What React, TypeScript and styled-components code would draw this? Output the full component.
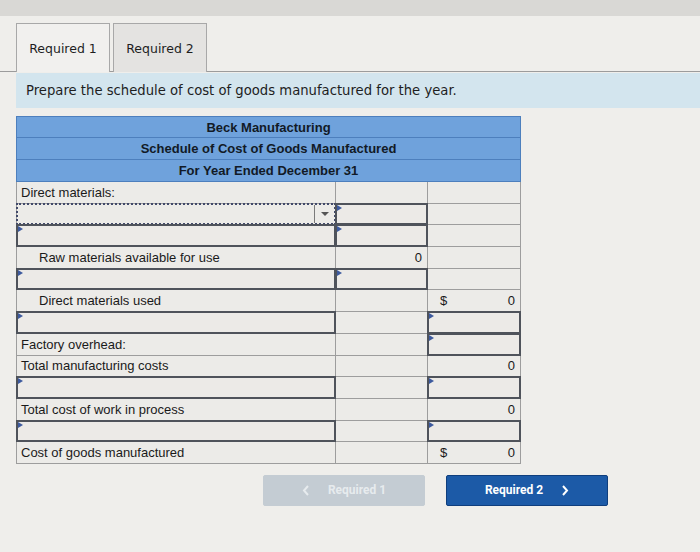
import styled, { createGlobalStyle } from 'styled-components'

const GlobalStyle = createGlobalStyle`
  body {
    margin: 0;
    background: #efeeeb;
  }
`

type Cell = 'input' | 'zero' | 'dollar' | null

type Row = {
  label?: string
  indent?: boolean
  labelInput?: boolean
  select?: boolean
  c2?: Cell
  c3?: Cell
}

const rows: Row[] = [
  { label: 'Direct materials:' },
  { select: true, c2: 'input' },
  { labelInput: true, c2: 'input' },
  { label: 'Raw materials available for use', indent: true, c2: 'zero' },
  { labelInput: true, c2: 'input' },
  { label: 'Direct materials used', indent: true, c3: 'dollar' },
  { labelInput: true, c3: 'input' },
  { label: 'Factory overhead:', c3: 'input' },
  { label: 'Total manufacturing costs', c3: 'zero' },
  { labelInput: true, c3: 'input' },
  { label: 'Total cost of work in process', c3: 'zero' },
  { labelInput: true, c3: 'input' },
  { label: 'Cost of goods manufactured', c3: 'dollar' },
]

const Page = styled.div`
  width: 700px;
  height: 552px;
  overflow: hidden;
  font-family: 'DejaVu Sans', Verdana, sans-serif;
`

const TopBand = styled.div`
  height: 16px;
  background: #d9d8d5;
`

const Tabs = styled.div`
  display: flex;
  gap: 3px;
  padding: 7px 0 0 16px;
  border-bottom: 1px solid #9c9c9c;
`

const Tab = styled.div<{ $active?: boolean }>`
  width: 94px;
  height: 49px;
  box-sizing: border-box;
  border: 1px solid #a8a8a8;
  border-bottom: none;
  background: ${(p) => (p.$active ? '#f1f0ee' : '#e4e3e1')};
  display: flex;
  align-items: center;
  justify-content: center;
  font-size: 12.5px;
  color: #1e1e1e;
  margin-bottom: -1px;
`

const Instruction = styled.div`
  margin: 1px 0 0 16px;
  height: 35px;
  background: #d3e5ee;
  display: flex;
  align-items: center;
  padding-left: 10px;
  font-size: 13.2px;
  color: #1e1e1e;
`

const Sheet = styled.div`
  margin: 8px 0 0 16px;
  width: 505px;
  font-family: 'Liberation Sans', Arial, sans-serif;
  font-size: 13px;
  color: #1a1a1a;
`

const HeaderRow = styled.div<{ $first?: boolean }>`
  height: 22px;
  box-sizing: border-box;
  background: #6fa2dc;
  border: 1px solid #4d7fbd;
  border-top-width: ${(p) => (p.$first ? '1px' : '0')};
  display: flex;
  align-items: center;
  justify-content: center;
  font-weight: bold;
  color: #121a26;
`

const GridRow = styled.div`
  display: grid;
  grid-template-columns: 320px 92px 93px;
  height: 21.7px;
`

const Cell = styled.div<{ $first?: boolean }>`
  position: relative;
  box-sizing: border-box;
  border-right: 1px solid #9d9d9d;
  border-bottom: 1px solid #9d9d9d;
  border-left: ${(p) => (p.$first ? '1px solid #9d9d9d' : 'none')};
  display: flex;
  align-items: center;
  background: #ecebe8;
  min-width: 0;
`

const Label = styled.span<{ $indent?: boolean }>`
  padding-left: ${(p) => (p.$indent ? '22px' : '4px')};
  white-space: nowrap;
`

const InputBox = styled.div`
  position: absolute;
  inset: -1px -1px -1px -1px;
  border: 2px solid #4f535b;
  background: #eceae7;

  &::before {
    content: '';
    position: absolute;
    left: 0;
    top: 0;
    border-left: 5px solid #3d5a9e;
    border-top: 3px solid transparent;
    border-bottom: 3px solid transparent;
  }
`

const SelectBox = styled.div`
  position: absolute;
  inset: -1px -1px -1px -1px;
  border: 2px dotted #41496a;
  display: flex;
  justify-content: flex-end;
`

const Caret = styled.div`
  width: 19px;
  border-left: 1px solid #7a7a7a;
  display: flex;
  align-items: center;
  justify-content: center;

  &::after {
    content: '';
    border-top: 4px solid #555;
    border-left: 4px solid transparent;
    border-right: 4px solid transparent;
  }
`

const Amount = styled.div`
  flex: 1;
  display: flex;
  justify-content: space-between;
  padding: 0 5px 0 12px;
`

const Buttons = styled.div`
  display: flex;
  gap: 21px;
  padding: 11px 0 0 263px;
  font-family: Roboto, 'Liberation Sans', sans-serif;
  font-weight: bold;
  font-size: 12px;
`

const NavButton = styled.div<{ $disabled?: boolean }>`
  width: 162px;
  height: 31px;
  box-sizing: border-box;
  border-radius: 2px;
  display: flex;
  align-items: center;
  justify-content: center;
  gap: 18px;
  background: ${(p) => (p.$disabled ? '#c4ccd3' : '#1c5aa7')};
  border: 1px solid ${(p) => (p.$disabled ? '#c4ccd3' : '#0f3e7d')};
  color: ${(p) => (p.$disabled ? '#e7ebee' : '#ffffff')};
`

const Chevron = ({ dir }: { dir: 'left' | 'right' }) => (
  <svg width="8" height="11" viewBox="0 0 8 11">
    <path
      d={dir === 'left' ? 'M6 1 L2 5.5 L6 10' : 'M2 1 L6 5.5 L2 10'}
      fill="none"
      stroke="currentColor"
      strokeWidth="2"
    />
  </svg>
)

const renderValue = (c?: Cell) => {
  if (c === 'input') return <InputBox />
  if (c === 'zero')
    return (
      <Amount>
        <span />
        <span>0</span>
      </Amount>
    )
  if (c === 'dollar')
    return (
      <Amount>
        <span>$</span>
        <span>0</span>
      </Amount>
    )
  return null
}

export default function App() {
  return (
    <Page>
      <GlobalStyle />
      <TopBand />
      <Tabs>
        <Tab $active>Required 1</Tab>
        <Tab>Required 2</Tab>
      </Tabs>
      <Instruction>Prepare the schedule of cost of goods manufactured for the year.</Instruction>
      <Sheet>
        <HeaderRow $first>Beck Manufacturing</HeaderRow>
        <HeaderRow>Schedule of Cost of Goods Manufactured</HeaderRow>
        <HeaderRow>For Year Ended December 31</HeaderRow>
        {rows.map((r, i) => (
          <GridRow key={i}>
            <Cell $first>
              {r.label && <Label $indent={r.indent}>{r.label}</Label>}
              {r.labelInput && <InputBox />}
              {r.select && (
                <SelectBox>
                  <Caret />
                </SelectBox>
              )}
            </Cell>
            <Cell>{renderValue(r.c2)}</Cell>
            <Cell>{renderValue(r.c3)}</Cell>
          </GridRow>
        ))}
      </Sheet>
      <Buttons>
        <NavButton $disabled>
          <Chevron dir="left" />
          <span>Required 1</span>
        </NavButton>
        <NavButton>
          <span>Required 2</span>
          <Chevron dir="right" />
        </NavButton>
      </Buttons>
    </Page>
  )
}
